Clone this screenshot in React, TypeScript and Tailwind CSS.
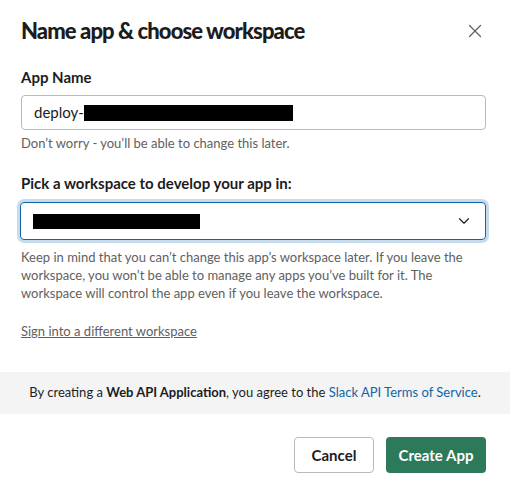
import { X, ChevronDown } from "lucide-react";

export default function App() {
  return (
    <div className="w-[510px] h-[497px] bg-white text-[#1d1c1d] font-['Lato','Noto_Sans',sans-serif] overflow-hidden">
      <div className="flex items-center justify-between pl-[21px] pr-[24px] pt-[17px]">
        <h1 className="text-[22px] leading-[28px] font-black tracking-[-0.9px]">
          Name app &amp; choose workspace
        </h1>
        <X className="size-[22px] text-[#5e5d60]" strokeWidth={1.3} />
      </div>

      <div className="px-[20px] pt-[21px]">
        <label className="block pl-[1px] text-[15px] leading-[22px] font-bold">App Name</label>
        <div className="mt-[7px] h-[35px] w-[465px] ml-[1px] rounded-[4px] border border-[#bbbabb] flex items-center pl-[12px] text-[15px]">
          <span>deploy-</span>
          <span className="inline-block w-[209px] h-[16px] bg-black" />
        </div>
        <p className="mt-[4px] pl-[1px] text-[13px] leading-[18px] text-[#616061]">
          Don&rsquo;t worry - you&rsquo;ll be able to change this later.
        </p>

        <label className="block mt-[20px] pl-[1px] text-[15px] leading-[22px] font-bold">
          Pick a workspace to develop your app in:
        </label>
        <div className="mt-[8px] h-[38px] w-[466px] rounded-[4px] border border-[#1264a3] ring-[3px] ring-[#c6dcee] flex items-center justify-between pl-[12px] pr-[12px]">
          <span className="inline-block w-[167px] h-[15px] bg-black" />
          <ChevronDown className="size-[18px] text-[#1d1c1d]" strokeWidth={1.5} />
        </div>
        <p className="mt-[8px] pl-[1px] text-[13px] leading-[18px] text-[#616061]">
          Keep in mind that you can&rsquo;t change this app&rsquo;s workspace later. If you leave the
          workspace, you won&rsquo;t be able to manage any apps you&rsquo;ve built for it. The
          workspace will control the app even if you leave the workspace.
        </p>

        <a className="block mt-[20px] pl-[1px] text-[13px] leading-[18px] text-[#616061] underline">
          Sign into a different workspace
        </a>
      </div>

      <div className="mt-[32px] h-[42px] bg-[#f4f4f4] flex items-center justify-center text-[13px] text-[#1d1c1d]">
        <span>
          By creating a <b>Web API Application</b>, you agree to the{" "}
          <a className="text-[#1264a3]">Slack API Terms of Service</a>.
        </span>
      </div>

      <div className="flex justify-end gap-[12px] pr-[24px] pt-[23px]">
        <button className="h-[36px] w-[80px] rounded-[4px] border border-[#bbbabb] bg-white text-[15px] font-bold">
          Cancel
        </button>
        <button className="h-[36px] w-[100px] rounded-[4px] bg-[#2d7a5b] text-white text-[15px] font-bold">
          Create App
        </button>
      </div>
    </div>
  );
}
